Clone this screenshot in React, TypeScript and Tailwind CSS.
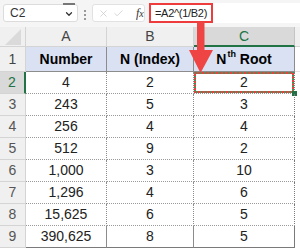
import { X, Check, ChevronDown } from 'lucide-react';

const rows = [
  ['4', '2', '2'],
  ['243', '5', '3'],
  ['256', '4', '4'],
  ['512', '9', '2'],
  ['1,000', '3', '10'],
  ['1,296', '4', '6'],
  ['15,625', '6', '5'],
  ['390,625', '8', '5'],
];

const dotted = 'border-dotted border-[#9a9a9a]';

export default function App() {
  return (
    <div className="relative w-[300px] h-[250px] overflow-hidden bg-white font-['Liberation_Sans',Arial,sans-serif] text-[#222]">
      {/* Formula bar */}
      <div className="h-[27px] bg-[#f5f5f5] flex items-start pt-[4px] pl-[3px]">
        <div className="relative w-[75px] h-[18px] bg-white border border-[#dcdcdc] rounded-[3px] flex items-center pl-[6px] text-[12px] text-[#333]">
          C2
          <ChevronDown className="absolute right-[3px] top-[4px] w-[10px] h-[10px] text-[#333]" strokeWidth={3} />
          <div className="absolute right-[2px] -top-[2px] w-[12px] h-[2px] bg-[#777]" />
        </div>
        <div className="w-[14px] flex flex-col items-center gap-[2px] pt-[6px]">
          <span className="w-[2px] h-[2px] bg-[#999]" />
          <span className="w-[2px] h-[2px] bg-[#999]" />
          <span className="w-[2px] h-[2px] bg-[#999]" />
        </div>
        <div className="w-[53px] h-[18px] bg-white border border-[#e2e2e2] rounded-[3px] flex items-center pl-[5px] gap-[4px]">
          <X className="w-[11px] h-[11px] text-[#c4c4c4]" strokeWidth={1.5} />
          <Check className="w-[11px] h-[11px] text-[#c4c4c4]" strokeWidth={1.5} />
          <span className="ml-[8px] text-[12px] italic font-['Liberation_Serif',serif] text-[#333]">
            f<span className="text-[10px]">x</span>
          </span>
        </div>
        <div className="ml-[4px] flex-1 h-[20px] -mt-[1px] bg-white flex items-start">
          <div className="w-[64px] h-[20px] border-2 border-[#ee3b3b] flex items-center pl-[4px] text-[11px] tracking-[-0.3px] text-[#222] whitespace-nowrap">
            =A2^(1/B2)
          </div>
        </div>
      </div>

      {/* Grid */}
      <div className="grid grid-cols-[26px_81px_87px_101px_1fr] grid-rows-[20px_25px_repeat(8,22px)]">
        {/* column headers */}
        <div className="bg-[#f0f0f0] border-r border-b border-[#d4d4d4] relative">
          <svg className="absolute left-[5px] top-[2px]" width="16" height="16">
            <polygon points="16,0 16,16 0,16" fill="#dadada" />
          </svg>
        </div>
        {['A', 'B'].map((c) => (
          <div key={c} className="bg-[#f0f0f0] border-r border-b border-[#d4d4d4] flex items-center justify-center text-[14px] text-[#444]">
            {c}
          </div>
        ))}
        <div className="bg-[#d9d9d9] border-r border-b-2 border-r-[#c4c4c4] border-b-[#217346] flex items-center justify-center text-[14px] text-[#217346]">
          C
        </div>
        <div className="bg-[#f0f0f0] border-b border-[#d4d4d4]" />

        {/* row 1 */}
        <div className="bg-[#f0f0f0] border-r border-b border-[#d4d4d4] flex items-center justify-center text-[14px] text-[#444]">
          1
        </div>
        <div className="bg-[#d9e1f2] border-r border-b border-[#8c8c8c] flex items-center justify-center text-[14px] font-bold text-black">
          Number
        </div>
        <div className="bg-[#d9e1f2] border-r border-b border-[#8c8c8c] flex items-center justify-center text-[14px] font-bold text-black">
          N (Index)
        </div>
        <div className="bg-[#d9e1f2] border-r border-b border-[#8c8c8c] flex items-center justify-center text-[14px] font-bold text-black">
          N<sup className="text-[9px] -top-[0.6em] ml-[1px]">th</sup>&nbsp;Root
        </div>
        <div className="border-b border-[#e4e4e4]" />

        {rows.map((r, i) => {
          const n = i + 2;
          const last = i === rows.length - 1;
          const bb = last ? 'border-b border-b-[#7a7a7a]' : `border-b ${dotted}`;
          return [
            <div
              key={`h${n}`}
              className={
                n === 2
                  ? 'bg-[#d9d9d9] border-r-2 border-r-[#217346] border-b border-b-[#d4d4d4] flex items-center justify-center text-[14px] text-[#217346]'
                  : 'bg-[#f0f0f0] border-r border-b border-[#d4d4d4] flex items-center justify-center text-[14px] text-[#555]'
              }
            >
              {n}
            </div>,
            <div key={`a${n}`} className={`border-r border-r-[#8c8c8c] ${bb} flex items-center justify-center text-[14px]`}>
              {r[0]}
            </div>,
            <div key={`b${n}`} className={`border-r border-r-[#8c8c8c] ${bb} flex items-center justify-center text-[14px]`}>
              {r[1]}
            </div>,
            <div key={`c${n}`} className={`relative border-r border-r-[#7a7a7a] ${bb} flex items-center justify-center text-[14px]`}>
              {n === 2 && (
                <>
                  <svg className="absolute inset-0 w-full h-full" preserveAspectRatio="none">
                    <rect x="1" y="1" width="98" height="19" fill="none" stroke="#3c9a5c" strokeWidth="2" />
                    <rect x="1" y="1" width="98" height="19" fill="none" stroke="#ee3b3b" strokeWidth="2" strokeDasharray="2 1.5" />
                  </svg>
                  <div className="absolute -right-[3px] -bottom-[3px] w-[5px] h-[5px] bg-[#217346]" />
                </>
              )}
              <span className="relative">{r[2]}</span>
            </div>,
            <div key={`e${n}`} className="" />,
          ];
        })}
      </div>

      {/* red arrow */}
      <svg className="absolute left-0 top-0 pointer-events-none" width="300" height="250">
        <rect x="197" y="22" width="7.5" height="30" fill="#ef4444" />
        <polygon points="189,50 213,50 200.5,73" fill="#ef4444" />
      </svg>
    </div>
  );
}
